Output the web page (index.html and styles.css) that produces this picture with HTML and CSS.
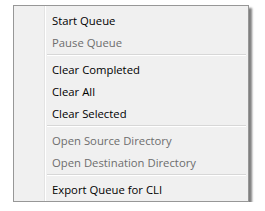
FILE: index.html
```html
<!DOCTYPE html>
<html lang="en">
<head>
    <meta charset="UTF-8">
    <title>Queue menu</title>
    <link rel="stylesheet" href="styles.css">
</head>
<body>
    <div class="menu">
        <div class="item">Start Queue</div>
        <div class="item disabled">Pause Queue</div>
        <div class="sep"></div>
        <div class="item">Clear Completed</div>
        <div class="item">Clear All</div>
        <div class="item">Clear Selected</div>
        <div class="sep"></div>
        <div class="item disabled">Open Source Directory</div>
        <div class="item disabled">Open Destination Directory</div>
        <div class="sep"></div>
        <div class="item">Export Queue for CLI</div>
    </div>
</body>
</html>
```

FILE: styles.css
```css
body {
    margin: 0;
    padding: 5px 0 0 13px;
    background: #fff;
    font-family: "Open Sans", "Noto Sans", sans-serif;
    font-size: 11.3px;
}

.menu {
    position: relative;
    width: 234px;
    padding: 3px 0 1px;
    background: #f0f0f0;
    border: 1px solid #979797;
    box-shadow: 3px 3px 2px rgba(0, 0, 0, 0.5);
}

/* icon gutter line */
.menu::before {
    content: "";
    position: absolute;
    top: 0;
    bottom: 0;
    left: 30px;
    width: 1px;
    background: #e3e3e3;
    border-right: 1px solid #fff;
}

.item {
    position: relative;
    height: 22px;
    line-height: 24px;
    padding-left: 38px;
    color: #000;
    white-space: nowrap;
}

.item.disabled {
    color: #6d6d6d;
}

.sep {
    position: relative;
    height: 5px;
    margin: 0 2px 0 33px;
}

.sep::after {
    content: "";
    position: absolute;
    left: 0;
    right: 0;
    top: 1px;
    height: 1px;
    background: #d7d7d7;
    border-bottom: 1px solid #fff;
}
```
